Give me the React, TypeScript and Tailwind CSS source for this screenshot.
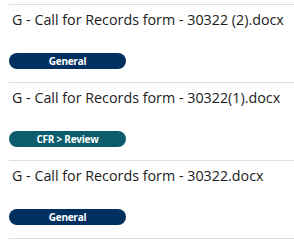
import React from "react"

type Doc = {
  id: number
  name: string
  tag: string
  tone: "navy" | "teal"
}

const docs: Doc[] = [
  { id: 1, name: "G - Call for Records form - 30322 (2).docx", tag: "General", tone: "navy" },
  { id: 2, name: "G - Call for Records form - 30322(1).docx", tag: "CFR > Review", tone: "teal" },
  { id: 3, name: "G - Call for Records form - 30322.docx", tag: "General", tone: "navy" },
]

const App = () => {
  return (
    <div className="h-[250px] w-[294px] bg-white pl-[9px] pt-[4px] font-['Open_Sans',sans-serif]">
      <ul className="border-b border-[#dedede]">
        {docs.map((doc) => (
          <li key={doc.id} className="border-t border-[#dedede] pb-[13px] pt-[5px]">
            <p className="h-5 whitespace-nowrap pl-[3px] text-[14.3px] leading-5 text-[#1c1c1c]">{doc.name}</p>
            <span
              className={
                doc.tone === "navy"
                  ? "mt-[23px] flex h-4 w-[117px] items-center justify-center rounded-full bg-[#00305f] text-[10px] font-bold tracking-tight text-white"
                  : "mt-[23px] flex h-4 w-[117px] items-center justify-center rounded-full bg-[#0d5c6e] text-[10px] font-bold tracking-tight text-white"
              }
            >
              {doc.tag}
            </span>
          </li>
        ))}
      </ul>
    </div>
  )
}

export default App
